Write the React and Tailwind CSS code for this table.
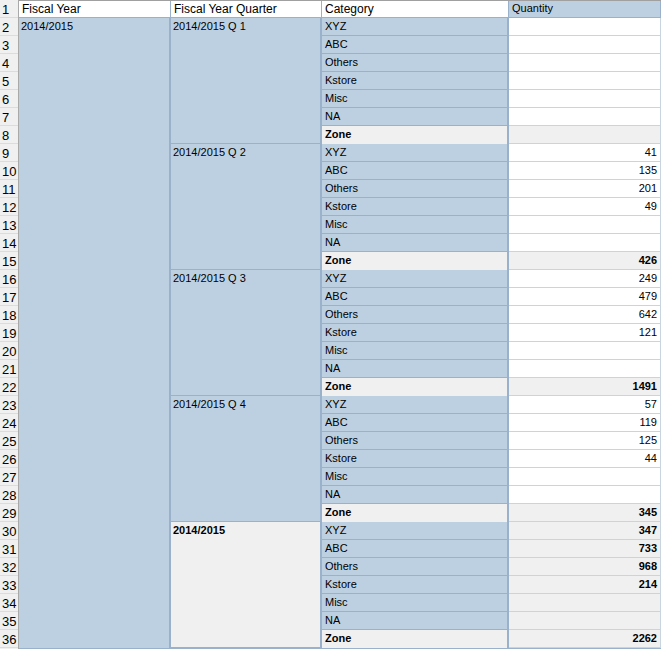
const groups = [
  {
    label: "2014/2015 Q 1",
    rows: [
      ["XYZ", ""],
      ["ABC", ""],
      ["Others", ""],
      ["Kstore", ""],
      ["Misc", ""],
      ["NA", ""],
      ["Zone", ""],
    ],
  },
  {
    label: "2014/2015 Q 2",
    rows: [
      ["XYZ", "41"],
      ["ABC", "135"],
      ["Others", "201"],
      ["Kstore", "49"],
      ["Misc", ""],
      ["NA", ""],
      ["Zone", "426"],
    ],
  },
  {
    label: "2014/2015 Q 3",
    rows: [
      ["XYZ", "249"],
      ["ABC", "479"],
      ["Others", "642"],
      ["Kstore", "121"],
      ["Misc", ""],
      ["NA", ""],
      ["Zone", "1491"],
    ],
  },
  {
    label: "2014/2015 Q 4",
    rows: [
      ["XYZ", "57"],
      ["ABC", "119"],
      ["Others", "125"],
      ["Kstore", "44"],
      ["Misc", ""],
      ["NA", ""],
      ["Zone", "345"],
    ],
  },
  {
    label: "2014/2015",
    total: true,
    rows: [
      ["XYZ", "347"],
      ["ABC", "733"],
      ["Others", "968"],
      ["Kstore", "214"],
      ["Misc", ""],
      ["NA", ""],
      ["Zone", "2262"],
    ],
  },
];

const rowNumbers = Array.from({ length: 36 }, (_, i) => i + 1);

export default function App() {
  return (
    <div
      className="w-[668px] h-[651px] bg-white overflow-hidden text-black"
      style={{ fontFamily: '"Liberation Sans", Arial, sans-serif' }}
    >
      <div className="flex">
        {/* row numbers */}
        <div className="w-[19px] flex flex-col bg-[#f0f0f0] border-r border-[#a9a9a9]">
          {rowNumbers.map((n) => (
            <div
              key={n}
              className="h-[18px] border-b border-[#dcdcdc] text-[13px] leading-[19px] pl-[2px] whitespace-nowrap"
            >
              {n}
            </div>
          ))}
        </div>

        <div className="flex flex-col">
          {/* header */}
          <div className="flex h-[18px] border-t border-[#a0a0a0]">
            <div className="w-[152px] border-r border-b border-[#9ab1cb] text-[12px] leading-[16px] pl-[3px]">
              Fiscal Year
            </div>
            <div className="w-[151px] border-r border-b border-[#9ab1cb] text-[12px] leading-[16px] pl-[3px]">
              Fiscal Year Quarter
            </div>
            <div className="w-[187px] border-r border-b border-[#9ab1cb] text-[12px] leading-[16px] pl-[3px]">
              Category
            </div>
            <div className="w-[152px] bg-[#bdd0e1] border-r border-b border-[#9ab1cb] text-[11px] leading-[14px] pl-[3px]">
              Quantity
            </div>
          </div>

          {/* body */}
          <div className="flex border-b border-[#9ab1cb]">
            <div className="w-[152px] bg-[#bdd0e1] border-r-2 border-[#9ab1cb] text-[11px] leading-[14px] pl-[2px] pt-[1px]">
              2014/2015
            </div>
            <div className="flex flex-col">
              {groups.map((g) => (
                <div key={g.label} className="flex">
                  <div
                    className={`w-[151px] border-r-2 border-b border-[#9ab1cb] text-[11px] leading-[14px] pl-[2px] pt-[1px] ${
                      g.total ? "bg-[#f1f0f0] font-bold" : "bg-[#bdd0e1]"
                    }`}
                  >
                    {g.label}
                  </div>
                  <div className="flex flex-col">
                    {g.rows.map(([cat, qty], i) => {
                      const zone = cat === "Zone";
                      const last = i === g.rows.length - 1;
                      return (
                        <div key={cat} className="flex h-[18px]">
                          <div
                            className={`w-[187px] border-r-2 border-[#9ab1cb] text-[11px] leading-[14px] pl-[3px] pt-[1px] ${
                              last ? "border-b-0" : "border-b"
                            } ${zone ? "bg-[#f1f0f0] font-bold" : "bg-[#bdd0e1]"}`}
                          >
                            {cat}
                          </div>
                          <div
                            className={`w-[152px] border-r border-b text-[11px] leading-[14px] pr-[3px] pt-[1px] text-right ${
                              zone || g.total
                                ? "bg-[#f1f0f0] font-bold border-[#c9d4e1]"
                                : "bg-white border-[#c9d4e1]"
                            }`}
                          >
                            {qty}
                          </div>
                        </div>
                      );
                    })}
                  </div>
                </div>
              ))}
            </div>
          </div>
        </div>
      </div>
    </div>
  );
}
